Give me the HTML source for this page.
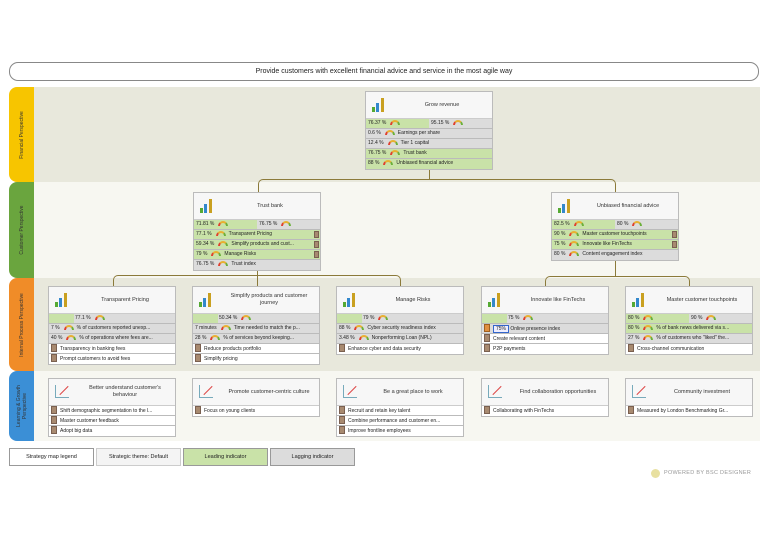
<!DOCTYPE html>
<html><head><meta charset="utf-8"><style>
*{margin:0;padding:0;box-sizing:border-box}
body{width:768px;height:543px;background:#fff;font-family:"Liberation Sans",sans-serif;position:relative;overflow:hidden;color:#222}
.a{position:absolute}
.title{left:9px;top:62px;width:750px;height:19px;border:1px solid #888;border-radius:9px;font-size:7px;text-align:center;line-height:17px;background:#fff}
.tab{position:absolute;left:9px;width:26px;border-radius:8px 0 0 8px;color:#333;font-size:5px}
.tab span{position:absolute;left:50%;top:50%;transform:translate(-50%,-50%) rotate(-90deg);white-space:nowrap;text-align:center;line-height:6px}
.band{position:absolute;left:34px;width:726px}
.box{position:absolute;width:128px;border:1px solid #bbb;background:#fff;font-size:5px}
.hd{height:27px;background:#f7f7f7;position:relative;border-bottom:1px solid #ccc}
.hd .t{position:absolute;left:30px;right:4px;top:0;bottom:0;display:flex;align-items:center;justify-content:center;text-align:center;font-size:5.5px;line-height:7px;color:#333}
.bars{position:absolute;left:6px;top:6px;width:14px;height:14px}
.bars i{position:absolute;bottom:0;width:3px}
.r{height:10px;line-height:9px;border-bottom:1px solid #bbb;white-space:nowrap;overflow:hidden;padding-left:2px;position:relative}
.g{background:#c9e2a8}.k{background:#dcdcdc}.w{background:#fff}
.r:last-child{border-bottom:0}
.ga{display:inline-block;width:10px;height:5px;border-radius:5px 5px 0 0;border:2px solid #e8b030;border-bottom:0;border-left-color:#e04030;border-right-color:#6bb03a;margin:0 3px 0 4px;vertical-align:-1px}
.ic{display:inline-block;width:6px;height:8px;background:#a88a70;border:1px solid #7a6050;margin-right:3px;vertical-align:-2px}
.sq{position:absolute;right:1px;top:1px;width:5px;height:7px;background:#a88a70;border:1px solid #7a6050}
.half{display:inline-block;width:50%;height:9px;vertical-align:top;padding-left:2px}
.ln{position:absolute;border-color:#8b7a3a;border-style:solid;border-width:0}
.lg{position:absolute;top:448px;height:18px;border:1px solid #999;font-size:5.5px;text-align:center;line-height:16px}
.tr{position:absolute;left:6px;top:6px;width:14px;height:13px;border-left:1px solid #7ab;border-bottom:1px solid #7ab}
.tr:after{content:"";position:absolute;left:2px;top:5px;width:12px;height:1px;background:#d44;transform:rotate(-45deg)}
</style></head><body>
<div class="a title">Provide customers with excellent financial advice and service in the most agile way</div>

<div class="tab" style="top:87px;height:95px;background:#f7c500"><span>Financial Perspective</span></div>
<div class="tab" style="top:182px;height:96px;background:#6aa53e"><span>Customer Perspective</span></div>
<div class="tab" style="top:278px;height:93px;background:#f08c28"><span>Internal Process Perspective</span></div>
<div class="tab" style="top:371px;height:70px;background:#3b8fd6"><span>Learning &amp; Growth<br>Perspective</span></div>

<div class="band" style="top:87px;height:95px;background:#e8e8dc"></div>
<div class="band" style="top:182px;height:96px;background:#f7f7f1"></div>
<div class="band" style="top:278px;height:93px;background:#e8e8dc"></div>
<div class="band" style="top:371px;height:70px;background:#f7f7f1"></div>

<div class="ln" style="left:429px;top:169px;height:10px;border-left-width:1px"></div>
<div class="ln" style="left:258px;top:179px;width:358px;height:13px;border-top-width:1px;border-left-width:1px;border-right-width:1px;border-radius:5px 5px 0 0"></div>
<div class="ln" style="left:257px;top:270px;height:5px;border-left-width:1px"></div>
<div class="ln" style="left:113px;top:275px;width:288px;height:11px;border-top-width:1px;border-left-width:1px;border-right-width:1px;border-radius:5px 5px 0 0"></div>
<div class="ln" style="left:257px;top:275px;height:11px;border-left-width:1px"></div>
<div class="ln" style="left:615px;top:260px;height:16px;border-left-width:1px"></div>
<div class="ln" style="left:545px;top:276px;width:145px;height:10px;border-top-width:1px;border-left-width:1px;border-right-width:1px;border-radius:5px 5px 0 0"></div>

<div class="box" style="left:365px;top:91px">
<div class="hd"><div class="bars"><i style="left:0;height:5px;background:#5a3"></i><i style="left:4px;height:9px;background:#38c"></i><i style="left:9px;height:14px;background:#c9a020"></i></div><div class="t">Grow revenue</div></div>
<div class="r" style="padding:0"><span class="half g">76.37 %<span class="ga"></span></span><span class="half k">95.15 %<span class="ga"></span></span></div>
<div class="r k">0.6 %<span class="ga"></span>Earnings per share</div>
<div class="r k">12.4 %<span class="ga"></span>Tier 1 capital</div>
<div class="r g">76.75 %<span class="ga"></span>Trust bank</div>
<div class="r g">88 %<span class="ga"></span>Unbiased financial advice</div>
</div>

<div class="box" style="left:193px;top:192px">
<div class="hd"><div class="bars"><i style="left:0;height:5px;background:#5a3"></i><i style="left:4px;height:9px;background:#38c"></i><i style="left:9px;height:14px;background:#c9a020"></i></div><div class="t">Trust bank</div></div>
<div class="r" style="padding:0"><span class="half g">71.81 %<span class="ga"></span></span><span class="half k">76.75 %<span class="ga"></span></span></div>
<div class="r g">77.1 %<span class="ga"></span>Transparent Pricing<i class="sq"></i></div>
<div class="r g">59.34 %<span class="ga"></span>Simplify products and cust...<i class="sq"></i></div>
<div class="r g">79 %<span class="ga"></span>Manage Risks<i class="sq"></i></div>
<div class="r k">76.75 %<span class="ga"></span>Trust index</div>
</div>

<div class="box" style="left:551px;top:192px">
<div class="hd"><div class="bars"><i style="left:0;height:5px;background:#5a3"></i><i style="left:4px;height:9px;background:#38c"></i><i style="left:9px;height:14px;background:#c9a020"></i></div><div class="t">Unbiased financial advice</div></div>
<div class="r" style="padding:0"><span class="half g">82.5 %<span class="ga"></span></span><span class="half k">80 %<span class="ga"></span></span></div>
<div class="r g">90 %<span class="ga"></span>Master customer touchpoints<i class="sq"></i></div>
<div class="r g">75 %<span class="ga"></span>Innovate like FinTechs<i class="sq"></i></div>
<div class="r k">80 %<span class="ga"></span>Content engagement index</div>
</div>

<div class="box" style="left:48px;top:286px">
<div class="hd"><div class="bars"><i style="left:0;height:5px;background:#5a3"></i><i style="left:4px;height:9px;background:#38c"></i><i style="left:9px;height:14px;background:#c9a020"></i></div><div class="t">Transparent Pricing</div></div>
<div class="r k" style="padding-left:26px"><span class="a g" style="left:0;top:0;width:25px;height:9px"></span>77.1 %<span class="ga"></span></div>
<div class="r k">7 %<span class="ga"></span>% of customers reported unexp...</div>
<div class="r k">40 %<span class="ga"></span>% of operations where fees are...</div>
<div class="r w"><i class="ic"></i>Transparency in banking fees</div>
<div class="r w"><i class="ic"></i>Prompt customers to avoid fees</div>
</div>
<div class="box" style="left:192px;top:286px">
<div class="hd"><div class="bars"><i style="left:0;height:5px;background:#5a3"></i><i style="left:4px;height:9px;background:#38c"></i><i style="left:9px;height:14px;background:#c9a020"></i></div><div class="t">Simplify products and customer journey</div></div>
<div class="r k" style="padding-left:26px"><span class="a g" style="left:0;top:0;width:25px;height:9px"></span>50.34 %<span class="ga"></span></div>
<div class="r k">7 minutes<span class="ga"></span>Time needed to match the p...</div>
<div class="r k">28 %<span class="ga"></span>% of services beyond keeping...</div>
<div class="r w"><i class="ic"></i>Reduce products portfolio</div>
<div class="r w"><i class="ic"></i>Simplify pricing</div>
</div>
<div class="box" style="left:336px;top:286px">
<div class="hd"><div class="bars"><i style="left:0;height:5px;background:#5a3"></i><i style="left:4px;height:9px;background:#38c"></i><i style="left:9px;height:14px;background:#c9a020"></i></div><div class="t">Manage Risks</div></div>
<div class="r k" style="padding-left:26px"><span class="a g" style="left:0;top:0;width:25px;height:9px"></span>79 %<span class="ga"></span></div>
<div class="r k">88 %<span class="ga"></span>Cyber security readiness index</div>
<div class="r k">3.48 %<span class="ga"></span>Nonperforming Loan (NPL)</div>
<div class="r w"><i class="ic"></i>Enhance cyber and data security</div>
</div>
<div class="box" style="left:481px;top:286px">
<div class="hd"><div class="bars"><i style="left:0;height:5px;background:#5a3"></i><i style="left:4px;height:9px;background:#38c"></i><i style="left:9px;height:14px;background:#c9a020"></i></div><div class="t">Innovate like FinTechs</div></div>
<div class="r k" style="padding-left:26px"><span class="a g" style="left:0;top:0;width:25px;height:9px"></span>75 %<span class="ga"></span></div>
<div class="r k"><i class="ic" style="background:#e09040;border-color:#a06020"></i><span style="border:1px solid #36c;background:#eef;padding:0 2px">75%</span> Online presence index</div>
<div class="r w"><i class="ic"></i>Create relevant content</div>
<div class="r w"><i class="ic"></i>P2P payments</div>
</div>
<div class="box" style="left:625px;top:286px">
<div class="hd"><div class="bars"><i style="left:0;height:5px;background:#5a3"></i><i style="left:4px;height:9px;background:#38c"></i><i style="left:9px;height:14px;background:#c9a020"></i></div><div class="t">Master customer touchpoints</div></div>
<div class="r" style="padding:0"><span class="half g">80 %<span class="ga"></span></span><span class="half k">90 %<span class="ga"></span></span></div>
<div class="r g">80 %<span class="ga"></span>% of bank news delivered via s...</div>
<div class="r k">27 %<span class="ga"></span>% of customers who "liked" the...</div>
<div class="r w"><i class="ic"></i>Cross-channel communication</div>
</div>

<div class="box" style="left:48px;top:378px">
<div class="hd"><div class="tr"></div><div class="t">Better understand customer's behaviour</div></div>
<div class="r w"><i class="ic"></i>Shift demographic segmentation to the l...</div>
<div class="r w"><i class="ic"></i>Master customer feedback</div>
<div class="r w"><i class="ic"></i>Adopt big data</div>
</div>
<div class="box" style="left:192px;top:378px">
<div class="hd"><div class="tr"></div><div class="t">Promote customer-centric culture</div></div>
<div class="r w"><i class="ic"></i>Focus on young clients</div>
</div>
<div class="box" style="left:336px;top:378px">
<div class="hd"><div class="tr"></div><div class="t">Be a great place to work</div></div>
<div class="r w"><i class="ic"></i>Recruit and retain key talent</div>
<div class="r w"><i class="ic"></i>Combine performance and customer en...</div>
<div class="r w"><i class="ic"></i>Improve frontline employees</div>
</div>
<div class="box" style="left:481px;top:378px">
<div class="hd"><div class="tr"></div><div class="t">Find collaboration opportunities</div></div>
<div class="r w"><i class="ic"></i>Collaborating with FinTechs</div>
</div>
<div class="box" style="left:625px;top:378px">
<div class="hd"><div class="tr"></div><div class="t">Community investment</div></div>
<div class="r w"><i class="ic"></i>Measured by London Benchmarking Gr...</div>
</div>

<div class="lg" style="left:9px;width:85px;background:#fff">Strategy map legend</div>
<div class="lg" style="left:96px;width:85px;background:#f4f4f4;border-color:#ccc">Strategic theme: Default</div>
<div class="lg" style="left:183px;width:85px;background:#c9e2a8">Leading indicator</div>
<div class="lg" style="left:270px;width:85px;background:#dcdcdc">Lagging indicator</div>

<div class="a" style="left:651px;top:469px;width:9px;height:9px;border-radius:50%;background:#e8e0a0"></div>
<div class="a" style="left:664px;top:470px;font-size:5.5px;color:#999;letter-spacing:0.3px">POWERED BY BSC DESIGNER</div>
</body></html>
